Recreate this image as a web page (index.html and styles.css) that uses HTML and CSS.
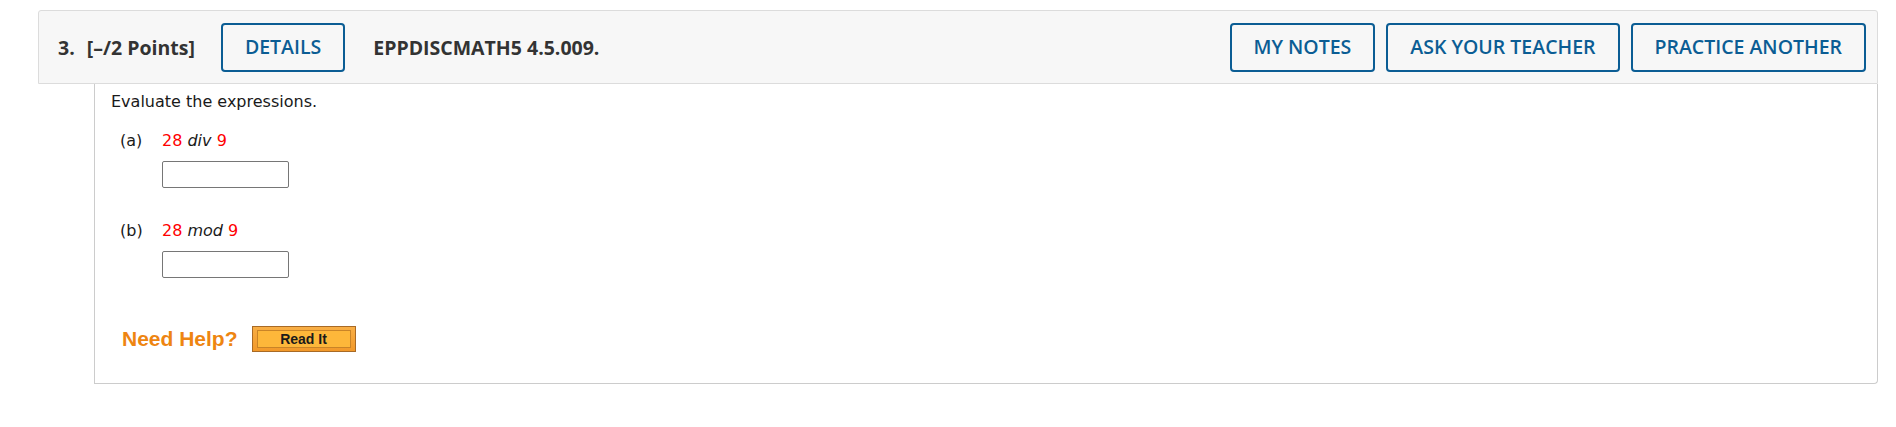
FILE: index.html
```html
<!DOCTYPE html>
<html>
<head>
<meta charset="utf-8">
<link rel="stylesheet" href="styles.css">
</head>
<body>
<div class="question">
  <div class="qheader">
    <div class="qleft">
      <span class="qnum">3.</span>
      <span class="qpoints">[–/2 Points]</span>
      <button class="hbtn">DETAILS</button>
      <span class="qcode">EPPDISCMATH5 4.5.009.</span>
    </div>
    <div class="qright">
      <button class="hbtn">MY NOTES</button>
      <button class="hbtn">ASK YOUR TEACHER</button>
      <button class="hbtn">PRACTICE ANOTHER</button>
    </div>
  </div>
  <div class="qbody">
    <p class="prompt">Evaluate the expressions.</p>
    <div class="part">
      <div class="part-row">
        <span class="plabel">(a)</span>
        <span class="expr"><span class="num">28</span> <i>div</i> <span class="num">9</span></span>
      </div>
      <input class="answer" type="text">
    </div>
    <div class="part part-b">
      <div class="part-row">
        <span class="plabel">(b)</span>
        <span class="expr"><span class="num">28</span> <i>mod</i> <span class="num">9</span></span>
      </div>
      <input class="answer" type="text">
    </div>
    <div class="help">
      <span class="help-text">Need Help?</span>
      <span class="readit"><span class="readit-inner">Read It</span></span>
    </div>
  </div>
</div>
</body>
</html>
```

FILE: styles.css
```css
html, body {
  margin: 0;
  padding: 0;
  background: #ffffff;
}

.question {
  padding: 10px 18px 0 38px;
}

.qheader {
  display: flex;
  justify-content: space-between;
  align-items: center;
  background: #f7f7f7;
  border: 1px solid #dcdcdc;
  border-radius: 3px 3px 0 0;
  height: 72px;
  padding: 0 11px 0 19px;
  font-family: "Open Sans", "Liberation Sans", sans-serif;
}

.qleft {
  display: flex;
  align-items: center;
}

.qnum, .qpoints, .qcode {
  font-size: 19.5px;
  font-weight: 700;
  color: #333333;
}

.qnum {
  margin-right: 12px;
}

.qpoints {
  margin-right: 26px;
}

.qcode {
  margin-left: 28px;
}

.qright {
  display: flex;
  align-items: center;
  gap: 11px;
}

.hbtn {
  font-family: "Open Sans", "Liberation Sans", sans-serif;
  font-size: 19.5px;
  font-weight: 600;
  color: #0b5d94;
  background: #f7f7f7;
  border: 2px solid #0b5d94;
  border-radius: 4px;
  height: 49px;
  padding: 0 22px;
  box-sizing: border-box;
  line-height: 1;
}

.qbody {
  margin-left: 56px;
  border: 1px solid #cccccc;
  border-top: none;
  border-radius: 0 0 4px 0;
  padding: 8px 16px 31px 16px;
  font-family: "DejaVu Sans", Verdana, sans-serif;
  font-size: 16px;
  line-height: 20px;
  color: #1a1a1a;
}

.prompt {
  margin: 0 0 19px 0;
}

.part {
  margin-left: 9px;
}

.part-b {
  margin-top: 33px;
}

.part-row {
  display: flex;
}

.plabel {
  width: 42px;
  flex: none;
}

.num {
  color: #ff0000;
}

.answer {
  display: block;
  margin: 10px 0 0 42px;
  width: 127px;
  height: 27px;
  box-sizing: border-box;
  border: 1px solid #767676;
  border-radius: 2px;
  padding: 0;
  background: #ffffff;
}

.help {
  display: flex;
  align-items: center;
  margin: 48px 0 0 11px;
}

.help-text {
  font-family: "Liberation Sans", Arial, sans-serif;
  font-weight: 700;
  font-size: 21px;
  color: #ee8511;
  margin-right: 14px;
}

.readit {
  display: flex;
  align-items: center;
  justify-content: center;
  width: 104px;
  height: 26px;
  box-sizing: border-box;
  border: 1px solid #a86a26;
  background: linear-gradient(#f8ae45, #f2992a);
  padding: 3px 4px;
}

.readit-inner {
  display: flex;
  align-items: center;
  justify-content: center;
  flex: 1;
  height: 100%;
  box-sizing: border-box;
  border: 1px solid #c98427;
  background: #fdb73a;
  font-family: "Liberation Sans", Arial, sans-serif;
  font-weight: 700;
  font-size: 14px;
  color: #1a1a1a;
}
```
